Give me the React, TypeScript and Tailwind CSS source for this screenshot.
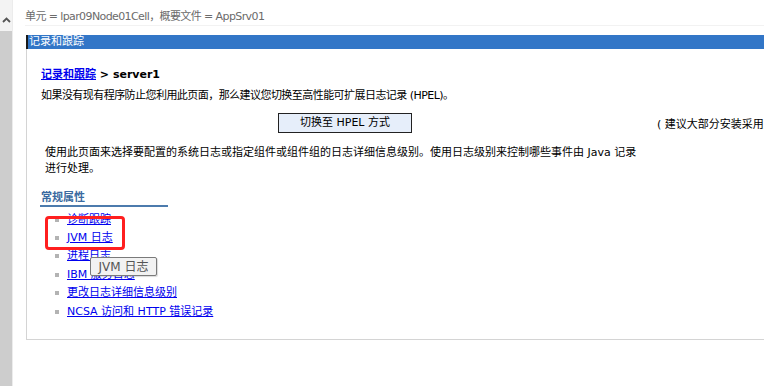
import React from "react";

const items = ["诊断跟踪", "JVM 日志", "进程日志", "IBM 服务日志", "更改日志详细信息级别", "NCSA 访问和 HTTP 错误记录"];

export default function App() {
  return (
    <div className="relative flex w-[764px] h-[386px] overflow-hidden bg-white font-['DejaVu_Sans','Noto_Sans_CJK_SC',sans-serif] text-[11px] text-black">
      <div className="flex flex-col w-[12px] shrink-0">
        <div className="h-[31px] bg-[#f3f3f3] flex items-start justify-center pt-[17px]">
          <svg width="9" height="6" viewBox="0 0 9 6">
            <polyline points="1,5 4.5,1.5 8,5" fill="none" stroke="#555" strokeWidth="1.8" />
          </svg>
        </div>
        <div className="flex-1 bg-[#cdcdcd]" />
      </div>
      <div className="w-[1px] bg-[#ececec] shrink-0" />
      <div className="flex-1 flex flex-col pl-[12px] min-w-0">
        <div className="pt-[10px] h-[26px] text-[#6b6b6b] leading-[14px] whitespace-nowrap tracking-[-0.6px] border-b border-[#f2f2f2]">
          单元 = lpar09Node01Cell，概要文件 = AppSrv01
        </div>
        <div className="mt-[9px] ml-[1px] h-[305px] border-l border-b border-[#d4d4d4] flex flex-col">
          <div className="h-[14px] bg-[#3276c7] border-l-2 border-[#1a1a1a] -ml-[1px] text-white leading-[14px] pl-[1px] whitespace-nowrap">
            记录和跟踪
          </div>
          <div className="pl-[14px] flex flex-col">
            <div className="mt-[19px] leading-[14px] font-bold whitespace-nowrap">
              <span className="text-[#0000ee] underline">记录和跟踪</span> &gt; server1
            </div>
            <div className="mt-[7px] leading-[14px] whitespace-nowrap tracking-[-0.55px]">
              如果没有现有程序防止您利用此页面，那么建议您切换至高性能可扩展日志记录 (HPEL)。
            </div>
            <div className="mt-[10px] flex items-center whitespace-nowrap">
              <div className="shrink-0 ml-[237px] w-[134px] h-[20px] border border-[#222] bg-[#e6eefa] flex items-center justify-center">
                切换至 HPEL 方式
              </div>
              <div className="shrink-0 ml-[245px] mt-[4px]">( 建议大部分安装采用此方式 )</div>
            </div>
            <div className="mt-[11px] pl-[4px] leading-[16px]">
              <div className="whitespace-nowrap">使用此页面来选择要配置的系统日志或指定组件或组件组的日志详细信息级别。使用日志级别来控制哪些事件由 Java 记录</div>
              <div>进行处理。</div>
            </div>
            <div className="mt-[14px] w-[128px] -ml-[1px] pl-[1px] border-b-2 border-[#4c7bad] text-[#3a6aa0] font-bold leading-[14px]">
              常规属性
            </div>
            <ul className="mt-[4px] pl-[14px] flex flex-col">
              {items.map((t) => (
                <li key={t} className="h-[18.4px] flex items-center gap-[8px] whitespace-nowrap">
                  <span className="w-[4px] h-[4px] bg-[#b3b3b3] shrink-0" />
                  <span className="text-[#0000ee] underline leading-[14px]">{t}</span>
                </li>
              ))}
            </ul>
          </div>
        </div>
      </div>
      <div className="absolute left-[45px] top-[216px] w-[80px] h-[34px] border-[3px] border-[#ff1f1f] rounded-[4px]" />
      <div className="absolute left-[90px] top-[257px] w-[67px] h-[19px] border border-[#7a7a7a] rounded-[2px] bg-[#f2f2f2] text-[#555] flex items-center justify-center text-[12px] whitespace-nowrap shadow-[1px_1px_1px_rgba(0,0,0,0.15)]">
        JVM 日志
      </div>
    </div>
  );
}
